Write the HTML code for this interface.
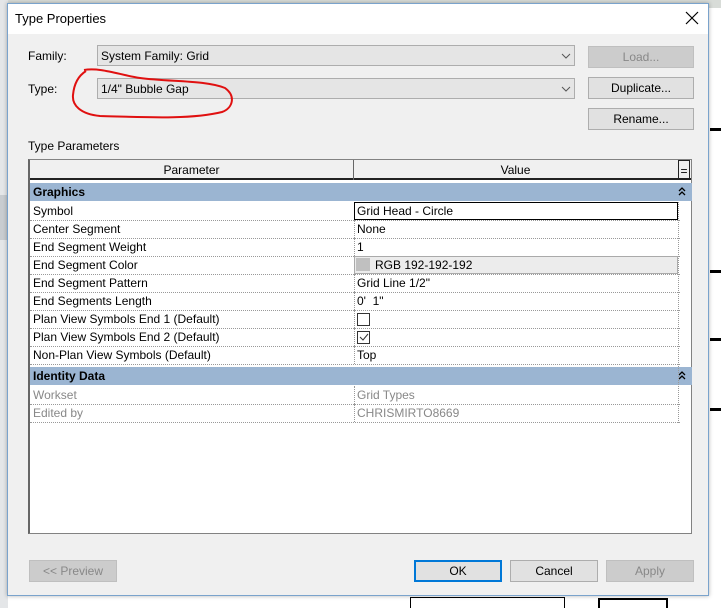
<!DOCTYPE html><html><head><style>
body{margin:0;width:721px;height:608px;position:relative;overflow:hidden;background:#fff;font-family:"Liberation Sans",sans-serif;font-size:12px;color:#000}
.a{position:absolute;box-sizing:border-box}
.combo{background:#e5e5e5;border:1px solid #adadad;padding:3px 0 0 3px}
.btn{background:#e1e1e1;border:1px solid #adadad;text-align:center;padding-top:3px}
.row{position:absolute;left:0;width:650px;height:18px;border-bottom:1px dotted #999}
.row span{position:absolute;top:2px}
.c1{left:3px}.c2{left:327px}
.vl{position:absolute;left:324px;top:0;height:18px;border-left:1px dotted #999}
.grp{position:absolute;left:0;width:662px;height:18px;background:#9bb5d2;font-weight:bold}
</style></head><body>
<div class="a" style="left:0;top:0;width:721px;height:8px;background:#d8dcd8"></div>
<div class="a" style="left:0;top:0;width:8px;height:608px;background:#e4e6e8"></div>
<div class="a" style="left:0;top:195px;width:8px;height:45px;background:#c8ccd0"></div>
<div class="a" style="left:710px;top:128px;width:11px;height:3px;background:#000"></div>
<div class="a" style="left:710px;top:270px;width:11px;height:3px;background:#000"></div>
<div class="a" style="left:710px;top:338px;width:11px;height:3px;background:#000"></div>
<div class="a" style="left:710px;top:408px;width:11px;height:3px;background:#000"></div>
<div class="a" style="left:410px;top:597px;width:155px;height:11px;border:1px solid #000;border-bottom:none"></div>
<div class="a" style="left:598px;top:598px;width:70px;height:10px;border:2px solid #000;border-bottom:none"></div>
<div class="a" style="left:7px;top:3px;width:702px;height:593px;background:#f0f0f0;border:1px solid #7aa3cc;box-shadow:0 0 4px rgba(0,0,0,.3)"></div>
<div class="a" style="left:8px;top:4px;width:700px;height:30px;background:#fff"></div>
<div class="a" style="left:15px;top:11px;font-size:13px">Type Properties</div>
<svg class="a" style="left:685px;top:11px" width="14" height="14"><path d="M1 1L13 13M13 1L1 13" stroke="#000" stroke-width="1.2"/></svg>
<div class="a" style="left:28px;top:49px">Family:</div>
<div class="a" style="left:28px;top:82px">Type:</div>
<div class="a combo" style="left:97px;top:45px;width:478px;height:21px">System Family: Grid</div>
<div class="a combo" style="left:97px;top:78px;width:478px;height:21px">1/4" Bubble Gap</div>
<svg class="a" style="left:561px;top:52px" width="10" height="8"><path d="M1 2L5 6L9 2" fill="none" stroke="#555"/></svg>
<svg class="a" style="left:561px;top:85px" width="10" height="8"><path d="M1 2L5 6L9 2" fill="none" stroke="#555"/></svg>
<div class="a btn" style="left:588px;top:46px;width:106px;height:22px;background:#ccc;border-color:#bfbfbf;color:#888">Load...</div>
<div class="a btn" style="left:588px;top:77px;width:106px;height:22px">Duplicate...</div>
<div class="a btn" style="left:588px;top:108px;width:106px;height:22px">Rename...</div>
<div class="a" style="left:28px;top:139px">Type Parameters</div>
<div class="a" style="left:28px;top:159px;width:664px;height:375px;background:#fff;border:1px solid #828282;border-left:2px solid #666"></div>
<div class="a" style="left:30px;top:160px;width:661px;height:20px;background:#f0f0f0;border-bottom:2px solid #222"></div>
<div class="a" style="left:30px;top:163px;width:323px;text-align:center">Parameter</div>
<div class="a" style="left:353px;top:160px;height:20px;border-left:1px solid #666"></div>
<div class="a" style="left:353px;top:163px;width:325px;text-align:center">Value</div>
<div class="a" style="left:678px;top:160px;width:12px;height:20px;border:1px solid #222;border-bottom:none;text-align:center;padding-top:3px">=</div>
<div class="a" style="left:30px;top:183px;width:661px;height:300px">
<div class="grp" style="top:0"><span style="position:absolute;left:3px;top:2px">Graphics</span><svg style="position:absolute;right:6px;top:4px" width="8" height="10"><path d="M1 4L4 1L7 4M1 8L4 5L7 8" fill="none" stroke="#000" stroke-width="1.3"/></svg></div>
<div class="row" style="top:19px"><span class="c1">Symbol</span><div class="a" style="left:324px;top:0;width:324px;height:18px;border:1px solid #000"></div><span class="c2">Grid Head - Circle</span></div>
<div class="row" style="top:37px"><div class="vl"></div><span class="c1">Center Segment</span><span class="c2">None</span></div>
<div class="row" style="top:55px"><div class="vl"></div><span class="c1">End Segment Weight</span><span class="c2">1</span></div>
<div class="row" style="top:73px"><div class="a" style="left:324px;top:0;width:324px;height:18px;background:#ececec;border:1px solid #aaa"></div><div class="a" style="left:326px;top:2px;width:14px;height:13px;background:#c0c0c0"></div><span class="c1">End Segment Color</span><span style="left:345px">RGB 192-192-192</span></div>
<div class="row" style="top:91px"><div class="vl"></div><span class="c1">End Segment Pattern</span><span class="c2">Grid Line 1/2"</span></div>
<div class="row" style="top:109px"><div class="vl"></div><span class="c1">End Segments Length</span><span class="c2">0'&nbsp; 1"</span></div>
<div class="row" style="top:127px"><div class="vl"></div><span class="c1">Plan View Symbols End 1 (Default)</span><div class="a" style="left:327px;top:3px;width:13px;height:13px;border:1px solid #333"></div></div>
<div class="row" style="top:145px"><div class="vl"></div><span class="c1">Plan View Symbols End 2 (Default)</span><div class="a" style="left:327px;top:3px;width:13px;height:13px;border:1px solid #333"></div><svg class="a" style="left:329px;top:5px" width="10" height="9"><path d="M1 4L4 7L9 1" fill="none" stroke="#333"/></svg></div>
<div class="row" style="top:163px"><div class="vl"></div><span class="c1">Non-Plan View Symbols (Default)</span><span class="c2">Top</span></div>
<div class="grp" style="top:184px"><span style="position:absolute;left:3px;top:2px">Identity Data</span><svg style="position:absolute;right:6px;top:4px" width="8" height="10"><path d="M1 4L4 1L7 4M1 8L4 5L7 8" fill="none" stroke="#000" stroke-width="1.3"/></svg></div>
<div class="row" style="top:203px;color:#888"><div class="vl"></div><span class="c1">Workset</span><span class="c2">Grid Types</span></div>
<div class="row" style="top:221px;color:#888"><div class="vl"></div><span class="c1">Edited by</span><span class="c2">CHRISMIRTO8669</span></div>
<div class="a" style="left:648px;top:19px;height:221px;border-left:1px dotted #999"></div>
</div>
<div class="a btn" style="left:29px;top:560px;width:88px;height:22px;background:#ccc;border-color:#bfbfbf;color:#888">&lt;&lt; Preview</div>
<div class="a btn" style="left:414px;top:560px;width:88px;height:22px;border:2px solid #0078d7;padding-top:2px">OK</div>
<div class="a btn" style="left:510px;top:560px;width:88px;height:22px">Cancel</div>
<div class="a btn" style="left:606px;top:560px;width:88px;height:22px;background:#ccc;border-color:#bfbfbf;color:#888">Apply</div>
<svg class="a" style="left:0;top:0" width="721" height="608"><path d="M84 70 C100 67 120 75 140 78 C170 82 205 80 225 88 C236 96 233 108 222 112 C190 120 140 117 100 116 C80 114 72 105 73 95 C74 84 78 76 86 71" fill="none" stroke="#e01010" stroke-width="2"/></svg>
</body></html>
